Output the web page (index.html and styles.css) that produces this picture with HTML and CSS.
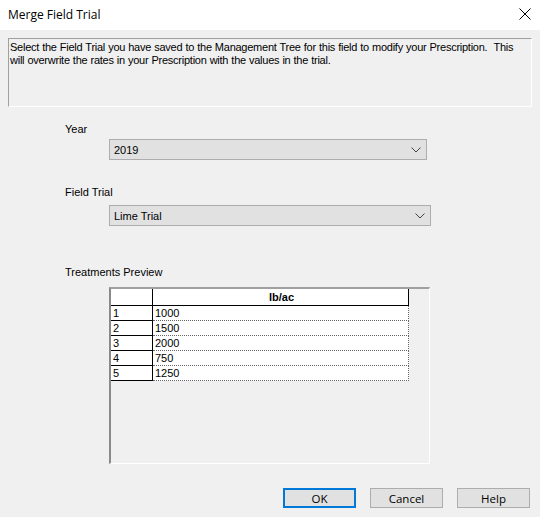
FILE: index.html
```html
<!DOCTYPE html>
<html>
<head>
<meta charset="utf-8">
<link rel="stylesheet" href="styles.css">
</head>
<body>
<div class="dialog">
  <div class="titlebar">
    <span class="title">Merge Field Trial</span>
    <svg class="close" width="12" height="12" viewBox="0 0 12 12"><path d="M0.5 0.5 L11.5 11.5 M11.5 0.5 L0.5 11.5" stroke="#000" stroke-width="1" fill="none"/></svg>
  </div>
  <div class="content">
    <div class="desc">Select the Field Trial you have saved to the Management Tree for this field to modify your Prescription.&nbsp; This will overwrite the rates in your Prescription with the values in the trial.</div>

    <div class="label label-year">Year</div>
    <div class="combo combo-year">
      <span>2019</span>
      <svg width="10" height="6" viewBox="0 0 10 6"><path d="M0.5 0.5 L5 5 L9.5 0.5" stroke="#444" fill="none"/></svg>
    </div>

    <div class="label label-trial">Field Trial</div>
    <div class="combo combo-trial">
      <span>Lime Trial</span>
      <svg width="10" height="6" viewBox="0 0 10 6"><path d="M0.5 0.5 L5 5 L9.5 0.5" stroke="#444" fill="none"/></svg>
    </div>

    <div class="label label-preview">Treatments Preview</div>
    <div class="grid">
      <table>
        <tr class="head"><th class="rh"></th><th class="dc">lb/ac</th></tr>
        <tr><td class="rh">1</td><td class="dc">1000</td></tr>
        <tr><td class="rh">2</td><td class="dc">1500</td></tr>
        <tr><td class="rh">3</td><td class="dc">2000</td></tr>
        <tr><td class="rh">4</td><td class="dc">750</td></tr>
        <tr><td class="rh">5</td><td class="dc">1250</td></tr>
      </table>
    </div>

    <div class="buttons">
      <div class="btn btn-default">OK</div>
      <div class="btn">Cancel</div>
      <div class="btn">Help</div>
    </div>
  </div>
</div>
</body>
</html>
```

FILE: styles.css
```css
html, body {
  margin: 0;
  padding: 0;
}
body {
  width: 540px;
  height: 517px;
  background: #f0f0f0;
  font-family: "Liberation Sans", Arial, sans-serif;
  font-size: 11px;
  color: #000;
  overflow: hidden;
}
.dialog {
  display: flex;
  flex-direction: column;
  height: 517px;
}
.titlebar {
  height: 30px;
  background: #fff;
  display: flex;
  align-items: center;
  justify-content: space-between;
  padding: 0 9px 0 8px;
  box-sizing: border-box;
}
.title {
  font-family: "Open Sans", "Noto Sans", sans-serif;
  font-size: 12px;
  position: relative;
  top: -1px;
}
.close {
  position: relative;
  top: -1px;
}
.content {
  display: flex;
  flex-direction: column;
  padding: 8px 8px 0 8px;
}
.desc {
  height: 69px;
  box-sizing: border-box;
  border-top: 1px solid #a0a0a0;
  border-left: 1px solid #a0a0a0;
  border-right: 1px solid #fff;
  border-bottom: 1px solid #fff;
  padding: 2px 1px 0 1px;
  line-height: 13px;
  letter-spacing: -0.25px;
  word-spacing: 0.3px;
}
.label {
  margin-left: 57px;
  line-height: 13px;
}
.label-year { margin-top: 16px; }
.label-trial { margin-top: 26px; }
.label-preview { margin-top: 40px; }
.combo {
  margin-left: 101px;
  height: 21px;
  box-sizing: border-box;
  background: #e1e1e1;
  border: 1px solid #adadad;
  display: flex;
  align-items: center;
  justify-content: space-between;
  padding: 0 5px 0 4px;
}
.combo-year { width: 318px; margin-top: 3px; }
.combo-trial { width: 322px; margin-top: 6px; }
.grid {
  margin-left: 101px;
  margin-top: 8px;
  width: 321px;
  height: 177px;
  box-sizing: border-box;
  border-top: 2px solid #a0a0a0;
  border-left: 2px solid #8a8a8a;
  border-right: 1px solid #fff;
  border-bottom: 1px solid #fff;
  background: #f0f0f0;
}
table {
  border-collapse: collapse;
  background: #fff;
}
th, td {
  padding: 0 0 0 2px;
  text-align: left;
  font-weight: normal;
  height: 14px;
  line-height: 14px;
}
tr.head th {
  height: 16px;
  border: 1px solid #000;
  border-top: none;
  font-weight: bold;
  text-align: center;
}
tr.head th.rh { border-left: none; }
td.rh {
  width: 39px;
  border: 1px solid #000;
  border-left: none;
}
.dc {
  width: 253px;
}
td.dc {
  border: 1px dotted #666;
}
.buttons {
  display: flex;
  justify-content: flex-end;
  gap: 14px;
  margin-top: 24px;
  margin-right: 2px;
}
.btn {
  width: 73px;
  height: 20px;
  box-sizing: border-box;
  background: #e1e1e1;
  border: 1px solid #adadad;
  display: flex;
  align-items: center;
  justify-content: center;
  font-family: "Open Sans", "Noto Sans", sans-serif;
  font-size: 11.5px;
}
.btn-default {
  border: 2px solid #0078d7;
}
```
